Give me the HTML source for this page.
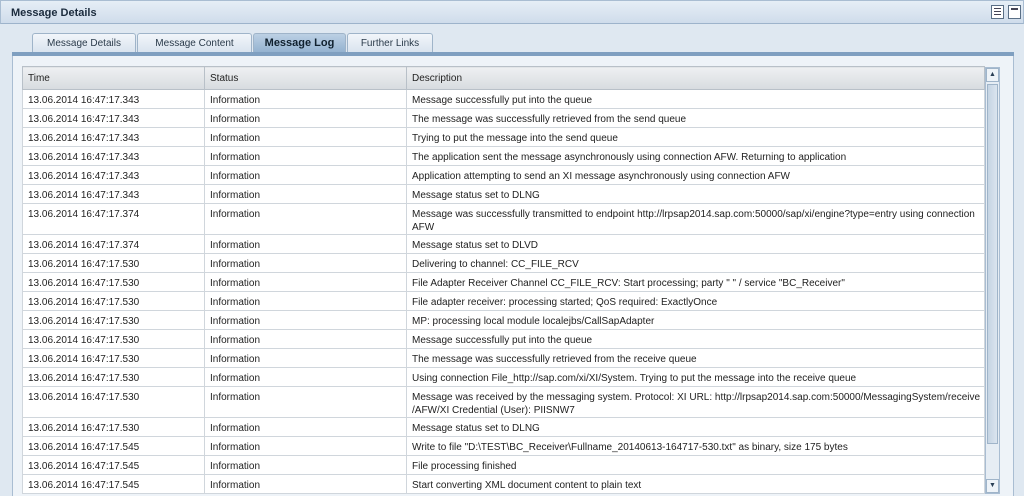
<!DOCTYPE html>
<html><head><style>
*{margin:0;padding:0;box-sizing:border-box}
body{width:1024px;height:494px;overflow:hidden;background:#dfe8f1;font-family:"Liberation Sans",Arial,sans-serif;font-size:10px;color:#222;position:relative}
.hdr{position:absolute;left:0;top:0;width:1024px;height:24px;background:linear-gradient(#e6eef6,#cfdceb);border:1px solid #a9bdd2;border-bottom:1px solid #9db3cb}
.hdr b{position:absolute;left:10px;top:6px;font-size:11px;color:#1b2b3d}
.ic{position:absolute;top:4px;width:13px;height:14px;background:#fff;border:1px solid #5a6f86}
.tab{position:absolute;top:33px;height:20px;border:1px solid #9fb4c9;border-bottom:none;background:linear-gradient(#f2f6fa,#d8e3ee);color:#2a3a4a;text-align:center;line-height:19px;font-size:10px;border-radius:3px 3px 0 0}
.tab.sel{background:linear-gradient(#bcd0e4,#92b1cf);font-weight:bold;font-size:11px;color:#10212f}
.bar{position:absolute;left:12px;top:52px;width:1002px;height:4px;background:#7f9fc0}
.panel{position:absolute;left:12px;top:56px;width:1002px;height:440px;background:#eef3f8;border-left:1px solid #a9bdd2;border-right:1px solid #a9bdd2}
table{position:absolute;left:22px;top:66px;width:963px;border-collapse:collapse;background:#fff;table-layout:fixed}
th{height:23px;background:linear-gradient(#eef0f2,#d7dbdf);font-weight:normal;text-align:left;padding-left:5px;border:1px solid #b8c0c8;color:#222}
td{height:19px;padding:0 5px;border:1px solid #d0d6dc;vertical-align:top;padding-top:4px;line-height:13px;white-space:nowrap}
td.d{height:31px;padding-top:4px;line-height:13px}
.sb{position:absolute;left:985px;top:67px;width:15px;height:427px;background:#e6edf4;border:1px solid #a9bdd2}
.thumb{position:absolute;left:1px;top:16px;width:11px;height:360px;background:linear-gradient(90deg,#c5d4e3,#dbe5ef);border:1px solid #9fb4c9}
.ab{position:absolute;left:0;width:13px;height:14px;background:#eef3f8;border:1px solid #9fb4c9;font-size:7px;text-align:center;line-height:12px;color:#2a3f55}
</style></head><body>
<div class="hdr"><b>Message Details</b>
<div class="ic" style="left:990px"><div style="margin:2px 2px;height:1px;background:#445;width:7px;box-shadow:0 3px #445,0 6px #445"></div></div>
<div class="ic" style="left:1007px"><div style="margin:2px;height:2px;background:#445"></div></div>
</div>
<div class="tab" style="left:32px;width:104px">Message Details</div>
<div class="tab" style="left:137px;width:115px">Message Content</div>
<div class="tab sel" style="left:253px;width:93px">Message Log</div>
<div class="tab" style="left:347px;width:86px">Further Links</div>
<div class="bar"></div>
<div class="panel"></div>
<table>
<colgroup><col style="width:182px"><col style="width:202px"><col></colgroup>
<tr><th>Time</th><th>Status</th><th>Description</th></tr>
<tr><td>13.06.2014 16:47:17.343</td><td>Information</td><td>Message successfully put into the queue</td></tr>
<tr><td>13.06.2014 16:47:17.343</td><td>Information</td><td>The message was successfully retrieved from the send queue</td></tr>
<tr><td>13.06.2014 16:47:17.343</td><td>Information</td><td>Trying to put the message into the send queue</td></tr>
<tr><td>13.06.2014 16:47:17.343</td><td>Information</td><td>The application sent the message asynchronously using connection AFW. Returning to application</td></tr>
<tr><td>13.06.2014 16:47:17.343</td><td>Information</td><td>Application attempting to send an XI message asynchronously using connection AFW</td></tr>
<tr><td>13.06.2014 16:47:17.343</td><td>Information</td><td>Message status set to DLNG</td></tr>
<tr><td class="d">13.06.2014 16:47:17.374</td><td class="d">Information</td><td class="d">Message was successfully transmitted to endpoint http://lrpsap2014.sap.com:50000/sap/xi/engine?type=entry using connection<br>AFW</td></tr>
<tr><td>13.06.2014 16:47:17.374</td><td>Information</td><td>Message status set to DLVD</td></tr>
<tr><td>13.06.2014 16:47:17.530</td><td>Information</td><td>Delivering to channel: CC_FILE_RCV</td></tr>
<tr><td>13.06.2014 16:47:17.530</td><td>Information</td><td>File Adapter Receiver Channel CC_FILE_RCV: Start processing; party " " / service "BC_Receiver"</td></tr>
<tr><td>13.06.2014 16:47:17.530</td><td>Information</td><td>File adapter receiver: processing started; QoS required: ExactlyOnce</td></tr>
<tr><td>13.06.2014 16:47:17.530</td><td>Information</td><td>MP: processing local module localejbs/CallSapAdapter</td></tr>
<tr><td>13.06.2014 16:47:17.530</td><td>Information</td><td>Message successfully put into the queue</td></tr>
<tr><td>13.06.2014 16:47:17.530</td><td>Information</td><td>The message was successfully retrieved from the receive queue</td></tr>
<tr><td>13.06.2014 16:47:17.530</td><td>Information</td><td>Using connection File_http://sap.com/xi/XI/System. Trying to put the message into the receive queue</td></tr>
<tr><td class="d">13.06.2014 16:47:17.530</td><td class="d">Information</td><td class="d">Message was received by the messaging system. Protocol: XI URL: http://lrpsap2014.sap.com:50000/MessagingSystem/receive<br>/AFW/XI Credential (User): PIISNW7</td></tr>
<tr><td>13.06.2014 16:47:17.530</td><td>Information</td><td>Message status set to DLNG</td></tr>
<tr><td>13.06.2014 16:47:17.545</td><td>Information</td><td>Write to file "D:\TEST\BC_Receiver\Fullname_20140613-164717-530.txt" as binary, size 175 bytes</td></tr>
<tr><td>13.06.2014 16:47:17.545</td><td>Information</td><td>File processing finished</td></tr>
<tr><td>13.06.2014 16:47:17.545</td><td>Information</td><td>Start converting XML document content to plain text</td></tr>
</table>
<div class="sb"><div class="ab" style="top:0">▲</div><div class="thumb"></div><div class="ab" style="top:411px">▼</div></div>
</body></html>
